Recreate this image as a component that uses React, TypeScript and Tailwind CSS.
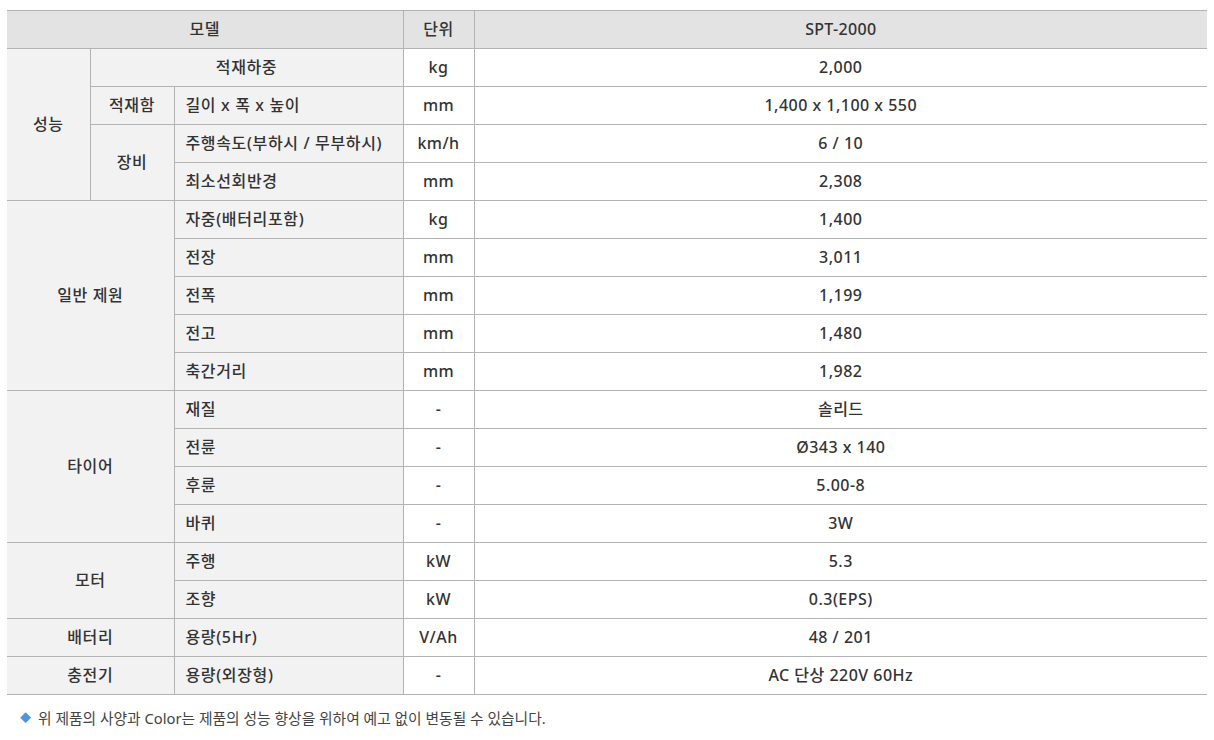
type Row = {
  cells: { text: string; rowSpan?: number; colSpan?: number; align?: 'left' | 'center' }[];
  unit: string;
  value: string;
};

const rows: Row[] = [
  { cells: [{ text: '성능', rowSpan: 4 }, { text: '적재하중', colSpan: 2 }], unit: 'kg', value: '2,000' },
  { cells: [{ text: '적재함' }, { text: '길이 x 폭 x 높이', align: 'left' }], unit: 'mm', value: '1,400 x 1,100 x 550' },
  { cells: [{ text: '장비', rowSpan: 2 }, { text: '주행속도(부하시 / 무부하시)', align: 'left' }], unit: 'km/h', value: '6 / 10' },
  { cells: [{ text: '최소선회반경', align: 'left' }], unit: 'mm', value: '2,308' },
  { cells: [{ text: '일반 제원', rowSpan: 5, colSpan: 2 }, { text: '자중(배터리포함)', align: 'left' }], unit: 'kg', value: '1,400' },
  { cells: [{ text: '전장', align: 'left' }], unit: 'mm', value: '3,011' },
  { cells: [{ text: '전폭', align: 'left' }], unit: 'mm', value: '1,199' },
  { cells: [{ text: '전고', align: 'left' }], unit: 'mm', value: '1,480' },
  { cells: [{ text: '축간거리', align: 'left' }], unit: 'mm', value: '1,982' },
  { cells: [{ text: '타이어', rowSpan: 4, colSpan: 2 }, { text: '재질', align: 'left' }], unit: '-', value: '솔리드' },
  { cells: [{ text: '전륜', align: 'left' }], unit: '-', value: 'Ø343 x 140' },
  { cells: [{ text: '후륜', align: 'left' }], unit: '-', value: '5.00-8' },
  { cells: [{ text: '바퀴', align: 'left' }], unit: '-', value: '3W' },
  { cells: [{ text: '모터', rowSpan: 2, colSpan: 2 }, { text: '주행', align: 'left' }], unit: 'kW', value: '5.3' },
  { cells: [{ text: '조향', align: 'left' }], unit: 'kW', value: '0.3(EPS)' },
  { cells: [{ text: '배터리', colSpan: 2 }, { text: '용량(5Hr)', align: 'left' }], unit: 'V/Ah', value: '48 / 201' },
  { cells: [{ text: '충전기', colSpan: 2 }, { text: '용량(외장형)', align: 'left' }], unit: '-', value: 'AC 단상 220V 60Hz' },
];

const font = { fontFamily: '"Noto Sans", "Noto Sans CJK KR", sans-serif' };

export default function App() {
  return (
    <div className="min-h-screen bg-white text-[#333]" style={font}>
      <div className="pl-[7px] pt-[10px] w-[1207px]">
        <table className="w-[1200px] table-fixed border-collapse text-[16px] leading-none">
          <colgroup>
            <col className="w-[83px]" />
            <col className="w-[84px]" />
            <col className="w-[229px]" />
            <col className="w-[71px]" />
            <col />
          </colgroup>
          <thead>
            <tr className="h-[38px] bg-[#e3e3e3]">
              <th colSpan={3} className="border-y border-r border-[#b3b3b3] pb-[2px] font-medium tracking-[0.04em]">모델</th>
              <th className="border-y border-x border-[#b3b3b3] pb-[2px] font-medium tracking-[0.04em]">단위</th>
              <th className="border-y border-[#b3b3b3] pb-[2px] font-medium tracking-[0.02em]">SPT-2000</th>
            </tr>
          </thead>
          <tbody>
            {rows.map((row, i) => (
              <tr key={i} className="h-[38px]">
                {row.cells.map((c, j) => (
                  <td
                    key={j}
                    rowSpan={c.rowSpan}
                    colSpan={c.colSpan}
                    className={`border-b border-r border-[#b3b3b3] bg-[#f2f2f2] pb-[2px] font-medium tracking-[0.04em] ${
                      c.align === 'left' ? 'pl-[11px] text-left' : 'text-center'
                    }`}
                  >
                    {c.text}
                  </td>
                ))}
                <td className="border-b border-r border-[#b3b3b3] bg-white pb-[2px] text-center font-medium tracking-[0.03em]">{row.unit}</td>
                <td className="border-b border-[#b3b3b3] bg-white pb-[2px] text-center font-medium tracking-[0.03em]">{row.value}</td>
              </tr>
            ))}
          </tbody>
        </table>
        <p className="mt-[12px] flex items-center pl-[13px] text-[14.75px] text-[#444]">
          <span className="mr-[7px] text-[11px] text-[#4d94e0]">◆</span>
          위 제품의 사양과 Color는 제품의 성능 향상을 위하여 예고 없이 변동될 수 있습니다.
        </p>
      </div>
    </div>
  );
}
